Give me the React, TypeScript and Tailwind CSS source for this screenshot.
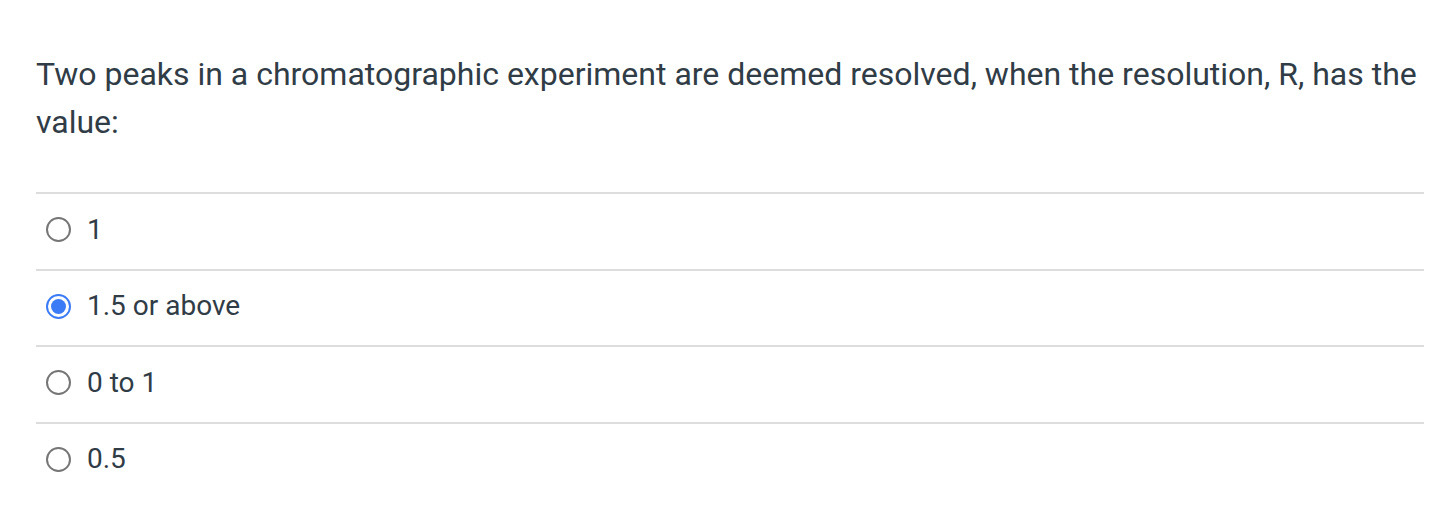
import React, { useState } from 'react';

const options = ['1', '1.5 or above', '0 to 1', '0.5'];

export default function App() {
  const [selected, setSelected] = useState(1);

  return (
    <main className="min-h-screen bg-white px-9 pt-[50px]" style={{ fontFamily: 'Roboto, "Liberation Sans", sans-serif' }}>
      <p className="w-[1388px] text-[32px] leading-[48px] text-[#303c46]">
        Two peaks in a chromatographic experiment are deemed resolved, when the resolution, R, has the value:
      </p>

      <div className="mt-[46px] w-[1388px]">
        {options.map((opt, i) => (
          <label
            key={opt}
            className="flex h-[76.5px] cursor-pointer items-center gap-4 border-t-2 border-[#dddddd] pb-[3px] pl-[10px]"
            onClick={() => setSelected(i)}
          >
            {selected === i ? (
              <span className="flex h-[25px] w-[25px] items-center justify-center rounded-full border-2 border-[#3b7bf5] bg-white">
                <span className="h-[15px] w-[15px] rounded-full bg-[#3b7bf5]" />
              </span>
            ) : (
              <span className="h-[25px] w-[25px] rounded-full border-2 border-[#767676] bg-white" />
            )}
            <span className="text-[28px] text-[#303c46]">{opt}</span>
          </label>
        ))}
      </div>
    </main>
  );
}
